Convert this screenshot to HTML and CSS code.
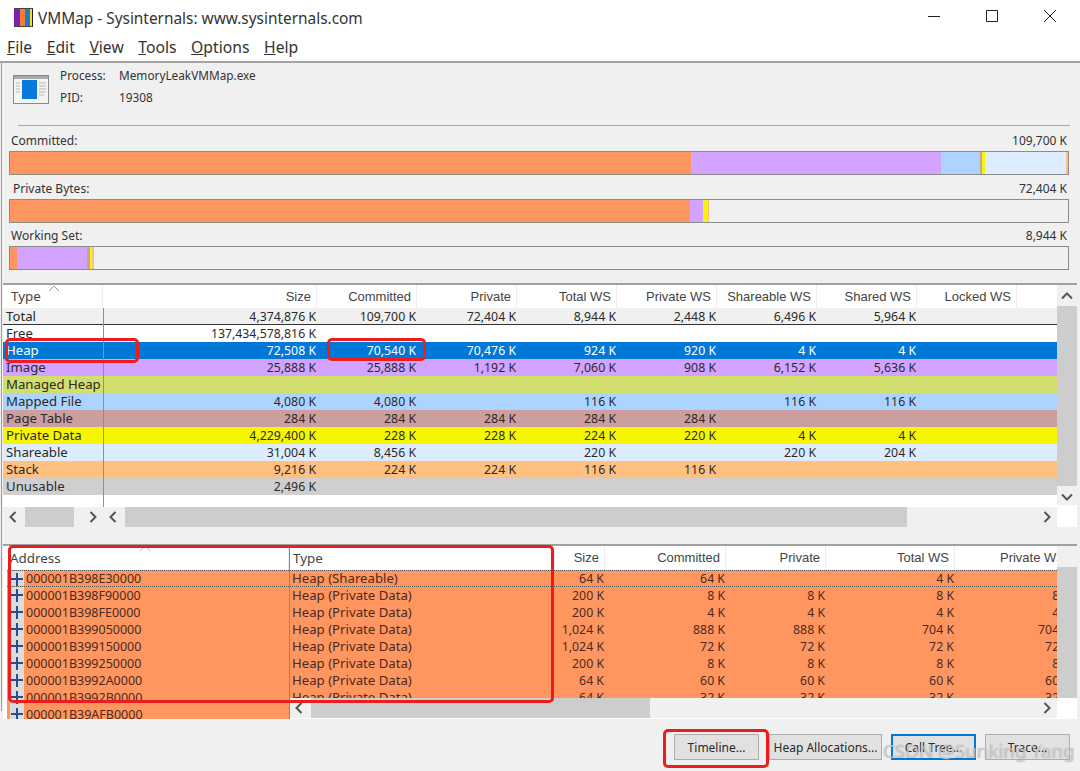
FILE: index.html
```html
<!DOCTYPE html>
<html lang="en">
<head>
<meta charset="utf-8">
<title>VMMap</title>
<link rel="stylesheet" href="styles.css">
</head>
<body>
<div class="app">
  <header class="titlebar">
    <div class="appicon"><i class="s1"></i><i class="s2"></i><i class="s3"></i><i class="s4"></i></div>
    <div class="apptitle">VMMap - Sysinternals: www.sysinternals.com</div>
    <div class="winbtns">
      <svg width="14" height="14" viewBox="0 0 14 14"><path d="M1 7.5H13" stroke="#222" fill="none"/></svg>
      <svg width="14" height="14" viewBox="0 0 14 14"><path d="M1.5 1.5H12.5V12.5H1.5Z" stroke="#222" fill="none"/></svg>
      <svg width="14" height="14" viewBox="0 0 14 14"><path d="M1 1L13 13M13 1L1 13" stroke="#222" fill="none"/></svg>
    </div>
  </header>
  <nav class="menubar">
    <span><u>F</u>ile</span><span><u>E</u>dit</span><span><u>V</u>iew</span><span><u>T</u>ools</span><span><u>O</u>ptions</span><span><u>H</u>elp</span>
  </nav>
  <section class="proc">
    <svg class="procicon" width="36" height="29" viewBox="0 0 36 29">
      <rect x="0.5" y="0.5" width="35" height="28" fill="#f4f4f4" stroke="#8a8a8a"/>
      <rect x="1" y="1" width="34" height="3" fill="#a9a9a9"/>
      <rect x="9" y="5" width="15" height="19" fill="#0a78dc"/>
      <path d="M3 8H7M3 11H7M3 14H7M3 17H7M26 8H33M26 11H33M26 14H33M26 17H33M26 20H31" stroke="#b5b5b5"/>
    </svg>
    <div class="procinfo">
      <div class="procline"><span class="proclabel">Process:</span><span>MemoryLeakVMMap.exe</span></div>
      <div class="procline"><span class="proclabel">PID:</span><span>19308</span></div>
    </div>
  </section>
  <hr class="rule">
  <section class="graphs">
    <div class="graph">
      <div class="graphhead"><span>Committed:</span><span>109,700 K</span></div>
      <div class="bar">
        <i class="c-heap" style="width:681px"></i><i class="c-image" style="width:250px"></i><i class="c-mapped" style="width:39px"></i><i class="c-page" style="width:2px"></i><i class="c-priv" style="width:3px"></i><i class="c-share" style="width:81px"></i><i class="c-stack" style="width:2px"></i>
      </div>
    </div>
    <div class="graph second">
      <div class="graphhead"><span>Private Bytes:</span><span>72,404 K</span></div>
      <div class="bar">
        <i class="c-heap" style="width:680px"></i><i class="c-image" style="width:13px"></i><i class="c-priv" style="width:5px"></i><i class="c-stack" style="width:1px"></i>
      </div>
    </div>
    <div class="graph">
      <div class="graphhead"><span>Working Set:</span><span>8,944 K</span></div>
      <div class="bar">
        <i class="c-heap" style="width:7px"></i><i class="c-image" style="width:70px"></i><i class="c-page" style="width:3px"></i><i class="c-priv" style="width:2px"></i><i class="c-stack" style="width:2px"></i>
      </div>
    </div>
  </section>

  <section class="toppane">
    <div class="topmain">
      <div class="row head cols-top">
        <div class="cell left">Type<svg class="sort sort-top" width="12" height="7" viewBox="0 0 12 7"><path d="M1 6L6 1L11 6" fill="none" stroke="#999"/></svg></div>
        <div class="cell">Size</div><div class="cell">Committed</div><div class="cell">Private</div><div class="cell">Total WS</div><div class="cell">Private WS</div><div class="cell">Shareable WS</div><div class="cell">Shared WS</div><div class="cell">Locked WS</div><div class="cell blank"></div>
      </div>
      <div class="rows">
        <div class="row cols-top r-total"><div class="cell left">Total</div><div class="cell">4,374,876 K</div><div class="cell">109,700 K</div><div class="cell">72,404 K</div><div class="cell">8,944 K</div><div class="cell">2,448 K</div><div class="cell">6,496 K</div><div class="cell">5,964 K</div><div class="cell"></div></div>
        <div class="row cols-top"><div class="cell left">Free</div><div class="cell">137,434,578,816 K</div><div class="cell"></div><div class="cell"></div><div class="cell"></div><div class="cell"></div><div class="cell"></div><div class="cell"></div><div class="cell"></div></div>
        <div class="row cols-top r-selected"><div class="cell left">Heap</div><div class="cell">72,508 K</div><div class="cell">70,540 K</div><div class="cell">70,476 K</div><div class="cell">924 K</div><div class="cell">920 K</div><div class="cell">4 K</div><div class="cell">4 K</div><div class="cell"></div></div>
        <div class="row cols-top c-image"><div class="cell left">Image</div><div class="cell">25,888 K</div><div class="cell">25,888 K</div><div class="cell">1,192 K</div><div class="cell">7,060 K</div><div class="cell">908 K</div><div class="cell">6,152 K</div><div class="cell">5,636 K</div><div class="cell"></div></div>
        <div class="row cols-top c-managed"><div class="cell left">Managed Heap</div><div class="cell"></div><div class="cell"></div><div class="cell"></div><div class="cell"></div><div class="cell"></div><div class="cell"></div><div class="cell"></div><div class="cell"></div></div>
        <div class="row cols-top c-mapped"><div class="cell left">Mapped File</div><div class="cell">4,080 K</div><div class="cell">4,080 K</div><div class="cell"></div><div class="cell">116 K</div><div class="cell"></div><div class="cell">116 K</div><div class="cell">116 K</div><div class="cell"></div></div>
        <div class="row cols-top c-page"><div class="cell left">Page Table</div><div class="cell">284 K</div><div class="cell">284 K</div><div class="cell">284 K</div><div class="cell">284 K</div><div class="cell">284 K</div><div class="cell"></div><div class="cell"></div><div class="cell"></div></div>
        <div class="row cols-top c-priv"><div class="cell left">Private Data</div><div class="cell">4,229,400 K</div><div class="cell">228 K</div><div class="cell">228 K</div><div class="cell">224 K</div><div class="cell">220 K</div><div class="cell">4 K</div><div class="cell">4 K</div><div class="cell"></div></div>
        <div class="row cols-top c-share"><div class="cell left">Shareable</div><div class="cell">31,004 K</div><div class="cell">8,456 K</div><div class="cell"></div><div class="cell">220 K</div><div class="cell"></div><div class="cell">220 K</div><div class="cell">204 K</div><div class="cell"></div></div>
        <div class="row cols-top c-stack"><div class="cell left">Stack</div><div class="cell">9,216 K</div><div class="cell">224 K</div><div class="cell">224 K</div><div class="cell">116 K</div><div class="cell">116 K</div><div class="cell"></div><div class="cell"></div><div class="cell"></div></div>
        <div class="row cols-top c-unus"><div class="cell left">Unusable</div><div class="cell">2,496 K</div><div class="cell"></div><div class="cell"></div><div class="cell"></div><div class="cell"></div><div class="cell"></div><div class="cell"></div><div class="cell"></div></div>
        <div class="freeze"></div>
      </div>
      <div class="hscrolls">
        <div class="hscroll frozen">
          <svg class="arr" width="8" height="12" viewBox="0 0 8 12"><path d="M6.5 1L1.5 6L6.5 11" fill="none" stroke="#555" stroke-width="2"/></svg>
          <div class="track"><div class="thumb thumb-a"></div></div>
          <svg class="arr" width="8" height="12" viewBox="0 0 8 12"><path d="M1.5 1L6.5 6L1.5 11" fill="none" stroke="#555" stroke-width="2"/></svg>
        </div>
        <div class="hscroll main">
          <svg class="arr" width="8" height="12" viewBox="0 0 8 12"><path d="M6.5 1L1.5 6L6.5 11" fill="none" stroke="#555" stroke-width="2"/></svg>
          <div class="track"><div class="thumb thumb-b"></div></div>
          <svg class="arr" width="8" height="12" viewBox="0 0 8 12"><path d="M1.5 1L6.5 6L1.5 11" fill="none" stroke="#555" stroke-width="2"/></svg>
        </div>
      </div>
    </div>
    <div class="vscroll top-v">
      <svg class="arr" width="12" height="8" viewBox="0 0 12 8"><path d="M1 6.5L6 1.5L11 6.5" fill="none" stroke="#555" stroke-width="2"/></svg>
      <div class="vthumb"></div>
      <svg class="arr" width="12" height="8" viewBox="0 0 12 8"><path d="M1 1.5L6 6.5L11 1.5" fill="none" stroke="#555" stroke-width="2"/></svg>
    </div>
  </section>

  <section class="lowerpane">
    <div class="lowleft">
      <div class="row head lowhead">
        <div class="cell left">Address<svg class="sort sort-low" width="12" height="7" viewBox="0 0 12 7"><path d="M1 6L6 1L11 6" fill="none" stroke="#bbb"/></svg></div>
      </div>
      <div class="addr focus"><b class="exp"></b><span>000001B398E30000</span></div>
      <div class="addr"><b class="exp"></b><span>000001B398F90000</span></div>
      <div class="addr"><b class="exp"></b><span>000001B398FE0000</span></div>
      <div class="addr"><b class="exp"></b><span>000001B399050000</span></div>
      <div class="addr"><b class="exp"></b><span>000001B399150000</span></div>
      <div class="addr"><b class="exp"></b><span>000001B399250000</span></div>
      <div class="addr"><b class="exp"></b><span>000001B3992A0000</span></div>
      <div class="addr"><b class="exp"></b><span>000001B3992B0000</span></div>
      <div class="addr"><b class="exp"></b><span>000001B39AFB0000</span></div>
    </div>
    <div class="lowright">
      <div class="lowview">
        <div class="row head cols-low">
          <div class="cell left">Type</div><div class="cell">Size</div><div class="cell">Committed</div><div class="cell">Private</div><div class="cell">Total WS</div><div class="cell">Private WS</div>
        </div>
        <div class="lowrows">
          <div class="row cols-low lrow focus"><div class="cell left">Heap (Shareable)</div><div class="cell">64 K</div><div class="cell">64 K</div><div class="cell"></div><div class="cell">4 K</div><div class="cell"></div></div>
          <div class="row cols-low lrow"><div class="cell left">Heap (Private Data)</div><div class="cell">200 K</div><div class="cell">8 K</div><div class="cell">8 K</div><div class="cell">8 K</div><div class="cell">8 K</div></div>
          <div class="row cols-low lrow"><div class="cell left">Heap (Private Data)</div><div class="cell">200 K</div><div class="cell">4 K</div><div class="cell">4 K</div><div class="cell">4 K</div><div class="cell">4 K</div></div>
          <div class="row cols-low lrow"><div class="cell left">Heap (Private Data)</div><div class="cell">1,024 K</div><div class="cell">888 K</div><div class="cell">888 K</div><div class="cell">704 K</div><div class="cell">704 K</div></div>
          <div class="row cols-low lrow"><div class="cell left">Heap (Private Data)</div><div class="cell">1,024 K</div><div class="cell">72 K</div><div class="cell">72 K</div><div class="cell">72 K</div><div class="cell">72 K</div></div>
          <div class="row cols-low lrow"><div class="cell left">Heap (Private Data)</div><div class="cell">200 K</div><div class="cell">8 K</div><div class="cell">8 K</div><div class="cell">8 K</div><div class="cell">8 K</div></div>
          <div class="row cols-low lrow"><div class="cell left">Heap (Private Data)</div><div class="cell">64 K</div><div class="cell">60 K</div><div class="cell">60 K</div><div class="cell">60 K</div><div class="cell">60 K</div></div>
          <div class="row cols-low lrow"><div class="cell left">Heap (Private Data)</div><div class="cell">64 K</div><div class="cell">32 K</div><div class="cell">32 K</div><div class="cell">32 K</div><div class="cell">32 K</div></div>
        </div>
      </div>
      <div class="hscroll lowh">
        <svg class="arr" width="8" height="12" viewBox="0 0 8 12"><path d="M6.5 1L1.5 6L6.5 11" fill="none" stroke="#555" stroke-width="2"/></svg>
        <div class="track"><div class="thumb thumb-c"></div></div>
        <svg class="arr" width="8" height="12" viewBox="0 0 8 12"><path d="M1.5 1L6.5 6L1.5 11" fill="none" stroke="#555" stroke-width="2"/></svg>
      </div>
    </div>
    <div class="vscroll low-v"><div class="vthumb"></div></div>
  </section>

  <footer class="buttons">
    <button class="btn">Timeline...</button>
    <button class="btn wide">Heap Allocations...</button>
    <button class="btn active">Call Tree...</button>
    <button class="btn">Trace...</button>
  </footer>

  <div class="edge"></div>
  <div class="mark m-heap"></div>
  <div class="mark m-committed"></div>
  <div class="mark m-address"></div>
  <div class="mark m-timeline"></div>
  <div class="watermark">CSDN @Sunking Yang</div>
</div>
</body>
</html>
```
FILE: styles.css
```css
* { box-sizing: border-box; }
html, body { margin: 0; padding: 0; }
body { width: 1080px; height: 771px; overflow: hidden; background: #f0f0f0; }
.app {
  position: relative; width: 1080px; height: 771px; overflow: hidden;
  display: flex; flex-direction: column; background: #f0f0f0;
  font-family: "Noto Sans", "Liberation Sans", sans-serif; font-size: 12.3px; color: #2a2a2a;
}
.titlebar { height: 32px; flex: none; background: #fff; display: flex; align-items: center; padding: 5px 0 0 14px; }
.appicon { width: 19px; height: 19px; display: flex; border-right: 1px solid #222; border-top: 1px solid #444; border-bottom: 1px solid #444; margin-top: -3px; }
.appicon i { display: block; height: 100%; }
.s1 { width: 6px; background: #7a22b0; }
.s2 { width: 5px; background: #f77f2a; }
.s3 { width: 5px; background: #1e78d8; }
.s4 { width: 2px; background: #f7e30a; }
.apptitle { margin-left: 5px; font-size: 15.4px; color: #333; margin-top: -1px; }
.winbtns { margin-left: auto; display: flex; gap: 44px; padding-right: 23px; margin-top: -5px; }
.menubar { height: 31px; flex: none; background: #fff; border-bottom: 2px solid #a4a4a4; display: flex; gap: 14.6px; padding: 5px 0 0 7px; font-size: 15.7px; line-height: 21px; color: #333; }
.proc { height: 62px; flex: none; display: flex; padding: 11px 0 0 13px; }
.procicon { margin-top: 1px; }
.procinfo { margin-left: 11px; margin-top: -10px; }
.procline { display: flex; height: 22px; align-items: center; font-size: 11.8px; color: #333; }
.proclabel { width: 59px; }
.rule { height: 1px; flex: none; border: 0; background: #a8a8a8; margin: 0 10px 0 18px; }
.graphs { height: 157px; flex: none; padding: 7px 11px 0 9px; display: flex; flex-direction: column; }
.graph { height: 48px; }
.graph.second { height: 47px; }
.graphhead { height: 18px; display: flex; justify-content: space-between; align-items: flex-start; padding: 0 2px 0 2px; line-height: 15px; font-size: 12px; color: #333; }
.second .graphhead { padding-left: 4px; }
.bar { height: 24px; border: 1px solid #8c8c8c; display: flex; background: #f0f0f0; }
.bar i { display: block; height: 100%; flex: none; }

.c-heap { background: #ff9660; }
.c-image { background: #d2a3ff; }
.c-managed { background: #d2df6e; }
.c-mapped { background: #add3ff; }
.c-page { background: #cd9e9e; }
.c-priv { background: #f6f600; }
.c-share { background: #deecff; }
.c-stack { background: #ffc080; }
.c-unus { background: #cfcfcf; }

.toppane { height: 244px; flex: none; margin: 0 3px; border-top: 2px solid #a0a0a0; display: flex; background: #fff; }
.topmain { width: 1054px; flex: none; display: flex; flex-direction: column; }
.row { display: grid; height: 17px; white-space: nowrap; line-height: 17px; }
.cell { text-align: right; padding-right: 1px; overflow: hidden; }
.cell.left { text-align: left; padding: 0 0 0 3px; font-size: 13.2px; }
.cols-top { grid-template-columns: 100px 214px repeat(7, 100px) 40px; }
.head { height: 23px; background: #fff; line-height: 23px; }
.head .cell { padding-right: 5px; border-right: 1px solid #ececec; color: #444; position: relative; overflow: visible; font-family: "Liberation Sans", sans-serif; font-size: 13px; }
.head .cell.left { padding-left: 8px; font-family: "Noto Sans", sans-serif; font-size: 13.4px; }
.head .cell.blank { border-right: 0; }
.sort { position: absolute; }
.sort-top { left: 45px; top: 0; }
.sort-low { left: 132px; top: -1px; }
.rows { position: relative; height: 199px; flex: none; background: #fff; }
.r-total { background: #f0f0f0; border-bottom: 1px solid #333; }
.r-selected { background: #0078d7; color: #fff; }
.freeze { position: absolute; left: 100px; top: 0; width: 1px; height: 199px; background: #8f8f8f; }
.hscrolls { display: flex; height: 20px; flex: none; background: #f0f0f0; }
.hscroll { display: flex; align-items: center; background: #f0f0f0; }
.hscroll.frozen { width: 100px; padding: 0 6px; }
.hscroll.main { flex: 1; padding: 0 6px; }
.track { flex: 1; height: 20px; margin: 0 6px 0 8px; display: flex; }
.thumb { background: #cdcdcd; height: 100%; }
.thumb-a { width: 49px; }
.thumb-b { width: 782px; }
.thumb-c { width: 339px; }
.arr { flex: none; }
.vscroll { width: 20px; flex: none; background: #f0f0f0; display: flex; flex-direction: column; align-items: center; }
.top-v { height: 220px; padding-top: 7px; }
.top-v .vthumb { width: 100%; height: 180px; margin: 6px 0 7px; background: #cdcdcd; }

.lowerpane { height: 175px; flex: none; margin: 17px 3px 0 3px; border-top: 2px solid #a0a0a0; display: flex; background: #fff; align-items: flex-start; }
.lowleft { width: 287px; flex: none; height: 173px; padding-left: 4px; overflow: hidden; border-right: 1px solid #888; }
.lowhead { grid-template-columns: 1fr; height: 24px; line-height: 24px; }
.lowhead .cell.left { padding-left: 3px; }
.addr { height: 17px; line-height: 17px; background: #ff9660; display: flex; color: #4a2a20; }
.addr.focus, .lrow.focus { border-top: 1px dotted #555; border-bottom: 1px dotted #555; line-height: 15px; }
.addr span { padding-left: 2px; font-size: 12.5px; }
.exp { position: relative; width: 14px; flex: none; background: #dcdcdc; margin-left: 3px; }
.exp::before { content: ""; position: absolute; left: 1px; top: 7px; width: 12px; height: 2px; background: #24508f; }
.exp::after { content: ""; position: absolute; left: 6px; top: 2px; width: 2px; height: 13px; background: #24508f; }
.lowright { width: 767px; flex: none; display: flex; flex-direction: column; height: 172px; background: #f0f0f0; }
.lowview { height: 152px; overflow: hidden; flex: none; background: #fff; }
.cols-low { grid-template-columns: 265px 50px 121px 100px 129px 116px; width: 781px; }
.lowview .head { height: 24px; line-height: 24px; }
.lowview .head .cell.left { padding-left: 3px; }
.lowrows { height: 128px; overflow: hidden; }
.lrow { background: #ff9660; color: #4a2a20; }
.lrow .cell.left { padding-left: 2px; }
.lowh { height: 20px; padding: 0 6px 0 5px; }
.low-v { width: 20px; height: 152px; justify-content: flex-end; }
.low-v .vthumb { width: 100%; height: 131px; background: #cdcdcd; }

.buttons { flex: 1; display: flex; justify-content: flex-end; align-items: flex-start; gap: 9px; padding: 15px 10px 0 0; }
.btn { width: 85px; height: 26px; background: #e1e1e1; border: 1px solid #adadad; font: inherit; font-size: 12px; color: #2a2a2a; padding: 0; white-space: nowrap; }
.btn.wide { width: 113px; margin-left: 1px; }
.btn.active { border: 2px solid #0078d7; }

.edge { position: absolute; left: 1px; top: 62px; bottom: 60px; width: 1px; background: #6ea7dc; }
.mark { position: absolute; border: 3px solid #ee1c1c; border-radius: 5px; pointer-events: none; }
.m-heap { left: 5px; top: 338px; width: 134px; height: 25px; }
.m-committed { left: 327px; top: 338px; width: 99px; height: 23px; }
.m-address { left: 8px; top: 545px; width: 546px; height: 158px; }
.m-timeline { left: 663px; top: 729px; width: 106px; height: 39px; }
.watermark { position: absolute; left: 883px; top: 738px; font-size: 18.8px; color: rgba(255,255,255,.55); text-shadow: 0 0 1px rgba(90,90,90,.7); white-space: nowrap; }
```
